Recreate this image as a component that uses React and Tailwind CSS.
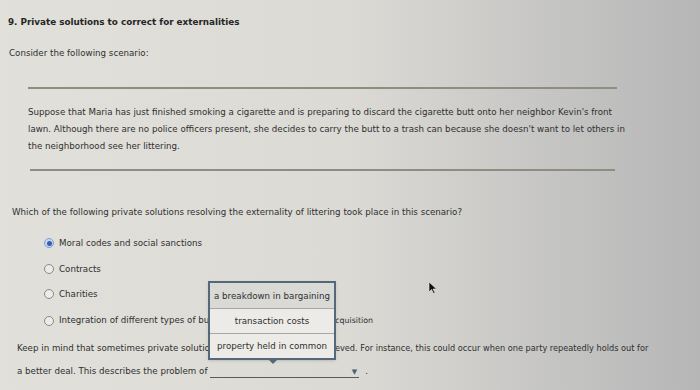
import React from "react";

const options = [
  { label: "Moral codes and social sanctions", checked: true },
  { label: "Contracts" },
  { label: "Charities" },
  { label: "Integration of different types of businesses through merger or acquisition" },
];

const menuItems = ["a breakdown in bargaining", "transaction costs", "property held in common"];

const Radio = ({ checked }) => (
  <span
    className={`flex items-center justify-center w-[10px] h-[10px] rounded-full border shrink-0 ${
      checked ? "border-[#7f9fd8] bg-[#c9d6f0]" : "border-[#8a8a88] bg-[#ecebe7]"
    }`}
  >
    {checked && <span className="w-[5px] h-[5px] rounded-full bg-[#3b5cab]"></span>}
  </span>
);

export default function App() {
  return (
    <div
      className="relative w-[700px] h-[390px] overflow-hidden bg-gradient-to-r from-[#e1e0db] via-[#dbdad5] to-[#b6b6b7] text-[#2f2f2f] text-[8.7px]"
      style={{ fontFamily: '"DejaVu Sans", Verdana, sans-serif' }}
    >
      {/* HEADER */}
      <h1 className="pl-[8px] pt-[16px] leading-[12px] text-[8.8px] font-bold text-[#262626]">
        9. Private solutions to correct for externalities
      </h1>
      <p className="pl-[9px] mt-[19px] leading-[12px]">Consider the following scenario:</p>

      {/* SCENARIO */}
      <div className="ml-[28px] mr-[83px] mt-[28px] h-[2px] bg-[#8e8d80]"></div>
      <p className="ml-[28px] mt-[15px] leading-[17px] whitespace-nowrap">
        Suppose that Maria has just finished smoking a cigarette and is preparing to discard the cigarette butt onto her
        neighbor Kevin's front
        <br />
        lawn. Although there are no police officers present, she decides to carry the butt to a trash can because she
        doesn't want to let others in
        <br />
        the neighborhood see her littering.
      </p>
      <div className="ml-[30px] mr-[85px] mt-[14px] h-[2px] bg-[#8e8d80]"></div>

      {/* QUESTION */}
      <p className="pl-[12px] mt-[35px] leading-[12px]">
        Which of the following private solutions resolving the externality of littering took place in this scenario?
      </p>
      <div className="flex flex-col gap-[13.7px] pl-[44px] mt-[19px]">
        {options.map((o) => (
          <label key={o.label} className="flex items-center gap-[5px] leading-[12px] whitespace-nowrap">
            <Radio checked={o.checked} />
            <span>
              {o.checked || o.label.length < 40 ? (
                o.label
              ) : (
                <>
                  Integration of different types of bu
                  <span className="text-[7.9px] tracking-[0.35px]">sinesses through merger or a</span>
                  <span className="text-[7.9px]">cquisition</span>
                </>
              )}
            </span>
          </label>
        ))}
      </div>

      <p className="pl-[17px] mt-[10px] leading-[22px] whitespace-nowrap">
        Keep in mind that sometimes private solutio
        <span className="text-[7.9px] tracking-[-0.2px]">ns to externalities cannot be achi</span>
        <span className="text-[8.2px]">
          eved. For instance, this could occur when one party repeatedly holds out for
        </span>
        <br />
        a better deal. This describes the problem of{" "}
        <span className="inline-flex items-end justify-end w-[149px] h-[12px] pr-[2px] border-b border-[#5a5a5a] align-middle">
          <span className="text-[7px] leading-[10px] text-[#4a5f78]">▼</span>
        </span>
        <span className="ml-[6px]">.</span>
      </p>

      {/* DROPDOWN MENU */}
      <div className="absolute left-[208px] top-[281px] w-[128px] border-2 border-[#55687a] bg-[#ecebe7] shadow-sm">
        {menuItems.map((m, i) => (
          <div
            key={m}
            className={`h-[25px] flex items-center justify-center leading-[12px] text-[#2f2f2f] whitespace-nowrap ${
              i === 0 ? "bg-[#d9d9d5]" : ""
            } ${i > 0 ? "border-t border-[#a7a7a3]" : ""}`}
          >
            {m}
          </div>
        ))}
        <span className="absolute left-[58px] -bottom-[6px] w-0 h-0 border-l-[5px] border-r-[5px] border-t-[5px] border-l-transparent border-r-transparent border-t-[#55687a]"></span>
      </div>

      {/* CURSOR */}
      <svg className="absolute left-[428px] top-[281px]" width="10" height="13" viewBox="0 0 10 13">
        <path d="M1 1 L1 11 L3.5 8.5 L5.5 12.5 L7 11.8 L5 8 L8.5 8 Z" fill="#111" stroke="#eee" strokeWidth="0.6" />
      </svg>
    </div>
  );
}
